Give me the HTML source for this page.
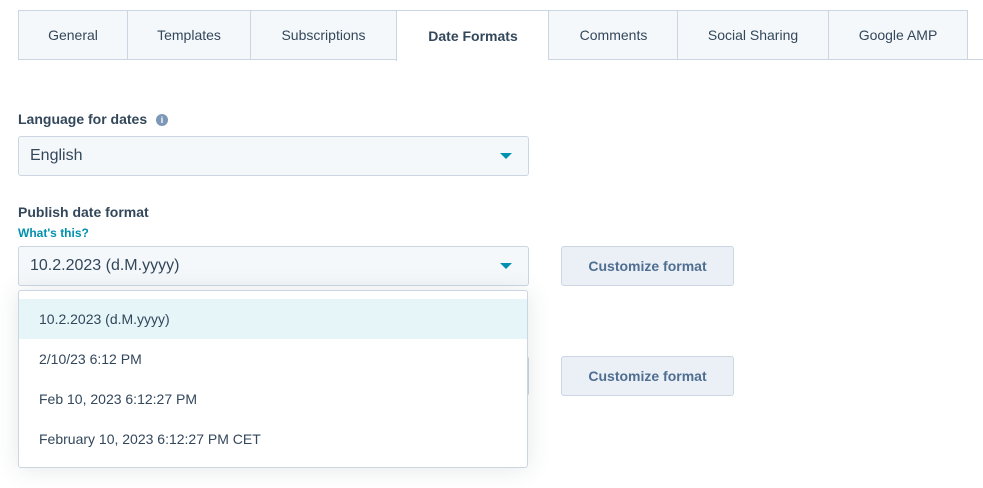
<!DOCTYPE html><html><head><style>
body{margin:0;width:983px;height:488px;background:#fff;font-family:"Liberation Sans",sans-serif;color:#33475b;position:relative;overflow:hidden}
.a{position:absolute;box-sizing:border-box}
.tab{top:10px;height:50px;background:#f5f8fa;border:1px solid #cbd6e2;border-right:none;font-size:14px;display:flex;align-items:center;justify-content:center;color:#33475b}
.sel{background:#f5f8fa;border:1px solid #cbd6e2;border-radius:3px;font-size:16px;padding-left:11px;display:flex;align-items:center}
.car{position:absolute;right:16px;top:50%;margin-top:-3px;width:0;height:0;border-left:6px solid transparent;border-right:6px solid transparent;border-top:6px solid #0091ae}
.btn{background:#eaf0f6;border:1px solid #cbd6e2;border-radius:3px;font-size:14px;font-weight:bold;color:#506e91;display:flex;align-items:center;justify-content:center}
.lbl{font-size:14px;font-weight:bold}
.it{left:0;width:100%;height:40px;font-size:14px;padding-left:20px;display:flex;align-items:center}
</style></head><body>
<div class="a" style="left:18px;right:0;top:59px;border-top:1px solid #cbd6e2"></div>
<div class="a tab" style="left:18px;width:109px">General</div>
<div class="a tab" style="left:127px;width:123px">Templates</div>
<div class="a tab" style="left:250px;width:146px">Subscriptions</div>
<div class="a tab" style="left:396px;width:153px;background:#fff;border-bottom:none;height:51px;font-weight:bold">Date Formats</div>
<div class="a tab" style="left:548px;width:130px">Comments</div>
<div class="a tab" style="left:677px;width:151px">Social Sharing</div>
<div class="a tab" style="left:828px;width:140px;border-right:1px solid #cbd6e2">Google AMP</div>
<div class="a lbl" style="left:18px;top:111px">Language for dates <span style="display:inline-block;width:12px;height:12px;border-radius:50%;background:#7c98b6;color:#fff;font-size:9px;text-align:center;line-height:12px;margin-left:5px;vertical-align:1px">i</span></div>
<div class="a sel" style="left:18px;top:136px;width:511px;height:40px">English<div class="car"></div></div>
<div class="a lbl" style="left:18px;top:204px">Publish date format</div>
<div class="a" style="left:18px;top:226px;font-size:12px;font-weight:bold;color:#0091ae">What's this?</div>
<div class="a sel" style="left:18px;top:246px;width:511px;height:40px">10.2.2023 (d.M.yyyy)<div class="car"></div></div>
<div class="a btn" style="left:561px;top:246px;width:173px;height:40px">Customize format</div>
<div class="a" style="left:18px;top:356px;width:511px;height:40px;border:1px solid #cbd6e2;border-radius:3px;background:#f5f8fa"></div>
<div class="a btn" style="left:561px;top:356px;width:173px;height:40px">Customize format</div>
<div class="a" style="left:18px;top:290px;width:510px;height:178px;background:#fff;border:1px solid #cbd6e2;border-radius:3px;box-shadow:0 1px 24px rgba(45,62,80,.12)">
<div class="a it" style="top:8px;background:#e5f5f8">10.2.2023 (d.M.yyyy)</div>
<div class="a it" style="top:48px">2/10/23 6:12 PM</div>
<div class="a it" style="top:88px">Feb 10, 2023 6:12:27 PM</div>
<div class="a it" style="top:128px">February 10, 2023 6:12:27 PM CET</div>
</div>
</body></html>
